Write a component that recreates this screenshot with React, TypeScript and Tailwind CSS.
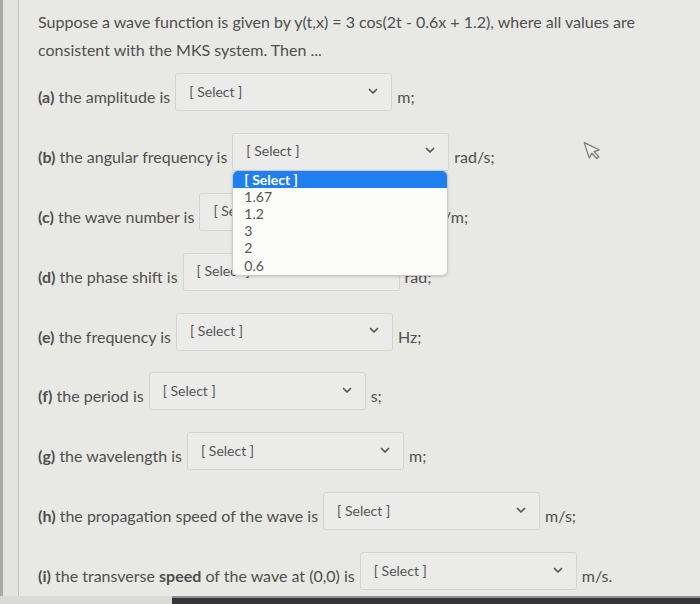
import React from "react";

type Row = {
  key: string;
  label: React.ReactNode;
  unit: string;
  open?: boolean;
};

const rows: Row[] = [
  { key: "a", label: "the amplitude is", unit: "m;" },
  { key: "b", label: "the angular frequency is", unit: "rad/s;", open: true },
  { key: "c", label: "the wave number is", unit: "rad/m;" },
  { key: "d", label: "the phase shift is", unit: "rad;" },
  { key: "e", label: "the frequency is", unit: "Hz;" },
  { key: "f", label: "the period is", unit: "s;" },
  { key: "g", label: "the wavelength is", unit: "m;" },
  { key: "h", label: "the propagation speed of the wave is", unit: "m/s;" },
  {
    key: "i",
    label: (
      <>
        the transverse <span className="font-bold">speed</span> of the wave at (0,0) is
      </>
    ),
    unit: "m/s.",
  },
];

const options = ["[ Select ]", "1.67", "1.2", "3", "2", "0.6"];

function Chevron() {
  return (
    <svg width="10" height="7" viewBox="0 0 10 7" className="shrink-0">
      <path d="M1.5 1.5 L5 5 L8.5 1.5" fill="none" stroke="#555" strokeWidth="1.7" strokeLinecap="round" strokeLinejoin="round" />
    </svg>
  );
}

function Dropdown() {
  return (
    <div className="absolute left-0 top-[37px] z-20 w-[216px] overflow-hidden rounded-[6px] border border-[#c9c9c9] bg-[#fbfbfa] pb-[1px] shadow-[0_1px_3px_rgba(0,0,0,0.15)]">
      {options.map((o, i) => (
        <div
          key={o}
          className={
            i === 0
              ? "h-[17px] bg-[#1f7fee] pl-[11px] text-[14px] font-bold leading-[17px] text-white"
              : "h-[17.2px] pl-[11px] text-[14px] leading-[17.2px] text-[#555]"
          }
        >
          {o}
        </div>
      ))}
    </div>
  );
}

function SelectBox({ open }: { open?: boolean }) {
  return (
    <div className="relative shrink-0">
      <div className="flex h-[38px] w-[217px] items-center justify-between rounded-[3px] border border-[#d3d3d1] bg-[#ebebe9] pb-[2px] pl-[13px] pr-[13px]">
        <span className="text-[14px] text-[#555]">[ Select ]</span>
        <Chevron />
      </div>
      {open && <Dropdown />}
    </div>
  );
}

function Cursor() {
  return (
    <svg width="20" height="24" viewBox="0 0 20 24" className="absolute left-[584px] top-[138px] rotate-[-18deg]">
      <path
        d="M3 2 L3 18 L7 14.5 L10 21 L12.5 20 L9.6 13.6 L15 13.4 Z"
        fill="#ededeb"
        stroke="#7a7a7a"
        strokeWidth="1.3"
        strokeLinejoin="round"
      />
    </svg>
  );
}

export default function App() {
  return (
    <div
      className="relative flex h-[604px] w-[700px] flex-col overflow-hidden bg-[#e8e8e5] text-[#4f4f4f]"
      style={{ fontFamily: "Lato, 'Noto Sans', sans-serif" }}
    >
      <div className="flex flex-1">
        {/* screen bezel on the left */}
        <div className="w-[3px] bg-[#a9a9a7]" />
        <div className="w-[15px] bg-[#e3e3e0]" />
        <div className="w-px bg-[#c2c2bf]" />

        <div className="flex-1 pl-[19px] pt-[8px]">
          <p className="text-[16px] leading-[28px]">
            Suppose a wave function is given by y(t,x) = 3 cos(2t - 0.6x + 1.2), where all values are
            <br />
            consistent with the MKS system. Then ...
          </p>

          <div className="mt-[9px] flex flex-col gap-[21.9px]">
            {rows.map((r) => (
              <div key={r.key} className="flex h-[38px] items-start">
                <span className="mr-[5px] mt-[10px] whitespace-nowrap text-[16px] leading-[28px]">
                  <span className="font-bold">({r.key})</span> {r.label}
                </span>
                <SelectBox open={r.open} />
                <span className="ml-[5px] mt-[10px] whitespace-nowrap text-[16px] leading-[28px]">{r.unit}</span>
              </div>
            ))}
          </div>
        </div>
      </div>

      {/* bottom edge of the monitor */}
      <div className="flex h-[8px]">
        <div className="w-[172px] bg-[#d9d9d6]" />
        <div className="flex flex-1 flex-col">
          <div className="h-[2px] bg-[#8e8e92]" />
          <div className="flex-1 bg-[#35353b]" />
        </div>
      </div>

      <Cursor />
    </div>
  );
}
